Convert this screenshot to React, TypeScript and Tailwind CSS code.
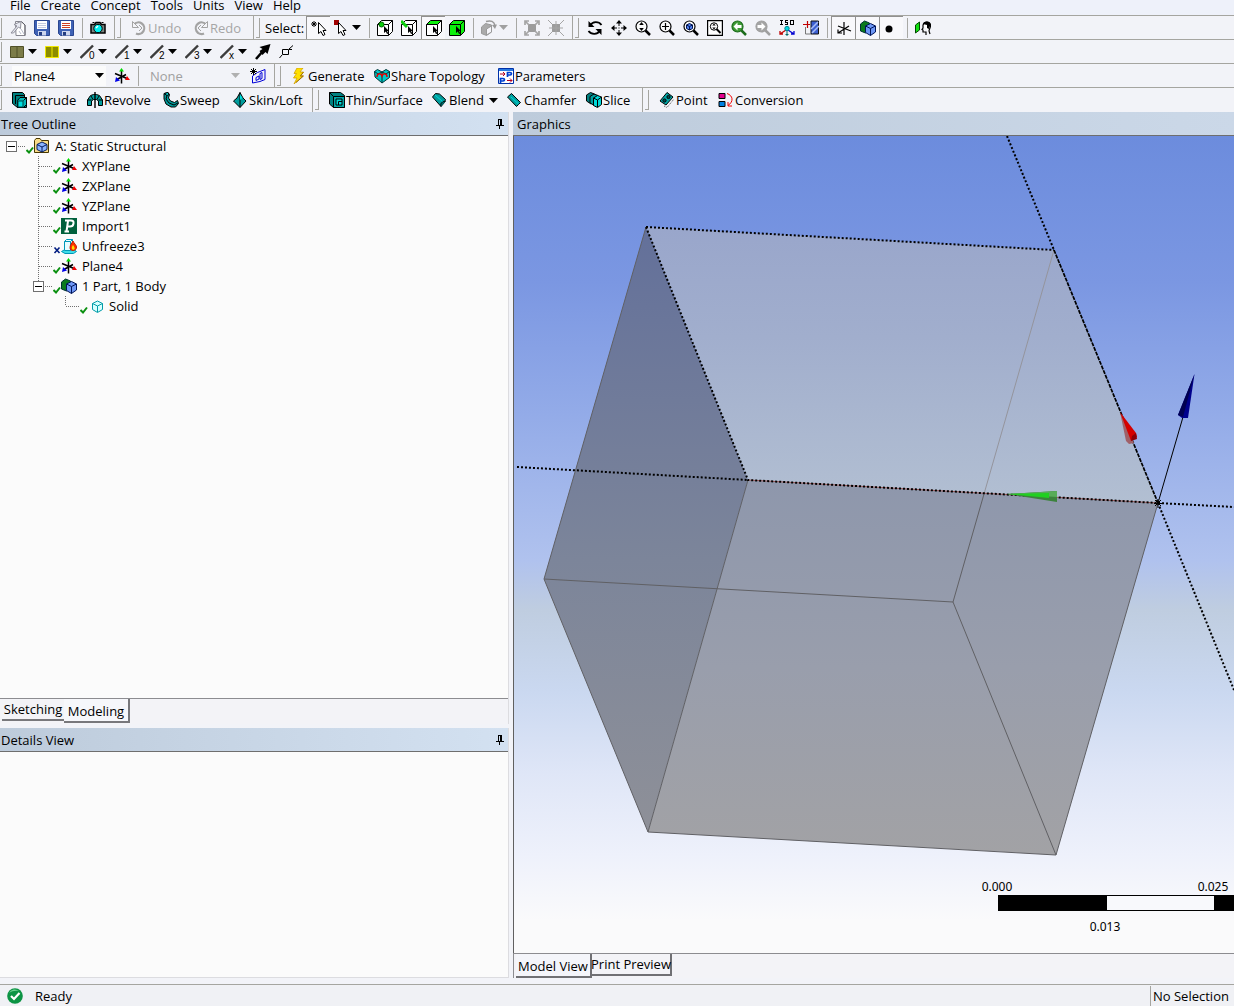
import React from "react";
import type { ReactNode } from "react";

/* ---------- icon helpers ---------- */

function Ico({ children, w = 16, crisp = false }: { children: ReactNode; w?: number; crisp?: boolean }) {
  return (
    <svg
      width={w}
      height={16}
      viewBox={`0 0 ${w} 16`}
      fill="none"
      stroke="#000"
      strokeWidth="1"
      shapeRendering={crisp ? "crispEdges" : "auto"}
      className="shrink-0"
      aria-hidden="true"
    >
      {children}
    </svg>
  );
}

function Caret({ className = "text-black" }: { className?: string }) {
  return (
    <svg width="9" height="5" viewBox="0 0 9 5" className={"shrink-0 " + className} aria-hidden="true">
      <path d="M0 0h9L4.5 5z" fill="currentColor" />
    </svg>
  );
}

const NewIcon = () => (
  <Ico>
    <path d="M5.5 1.500h5.500l4 3.500v10.500h-9z" fill="#fff" stroke="#85858f" />
    <path d="M15 15.500V5l-3.500-3.500" stroke="#606068" />
    <path d="M1 13l6-7-3-1.500 7-3-.5 7-2-1.500-5 6z" fill="#e8eaf2" stroke="#90909c" />
    <path d="M11 9l3 5M9 11l2 3" stroke="#b8bccb" />
  </Ico>
);

const SaveIcon = ({ lines = "#c5cbe0" }: { lines?: string }) => (
  <Ico>
    <path d="M.5.500h15v15H2.500l-2-2z" fill="#3f62b5" stroke="#2a4690" />
    <path d="M3 1h10v8H3z" fill="#fff" stroke="none" />
    <path d="M4 3.500h8M4 5.500h8M4 7.500h8" stroke={lines} />
    <path d="M4 11h8v4.500H4z" fill="#cdd6ee" stroke="none" />
    <path d="M5 12h3v3.500H5z" fill="#233c80" stroke="none" />
  </Ico>
);

const CameraIcon = () => (
  <Ico>
    <path d="M1 4.500h3.500l1.500-2h4l1.500 2H15v8.500H1z" fill="#7c8480" strokeWidth="1.500" />
    <path d="M2.500 2.500h2M11.500 2.500h2" />
    <circle cx="8" cy="8.500" r="4.200" fill="#00f0f0" />
    <path d="M6 8l2-2" stroke="#fff" strokeWidth="1.500" />
  </Ico>
);

const UndoIcon = ({ flip = false }: { flip?: boolean }) => (
  <Ico>
    <g transform={flip ? "matrix(-1 0 0 1 16 0)" : undefined} stroke="#a3a3a3">
      <path d="M3 4.500A5.800 5.800 0 1 1 5 13.500" strokeWidth="2.200" />
      <path d="M1.500 1.500v6h6z" fill="#f4f4f8" />
      <path d="M8 5l3 3-3 3" />
    </g>
  </Ico>
);

const PointerIcon = ({ red = false }: { red?: boolean }) => (
  <Ico>
    {red ? (
      <path d="M0 0h5v5H0z" fill="#a00000" stroke="none" />
    ) : (
      <path d="M3 1v6M0 4h6M1 2l4 4M5 2L1 6" />
    )}
    <path d={red ? "M4.500 2.500v11l2.500-2 2 4 2-1-2-4h3z" : "M7.500 2.500v11l2.500-2 2 4 2-1-2-4h3z"} fill="#fff" />
  </Ico>
);

const FilterCube = ({ kind }: { kind: "vertex" | "edge" | "face" | "body" }) => {
  const body = kind === "body";
  return (
    <Ico>
      <path d="M1 4l3-3h11v11l-3 3H1z" fill={body ? "#0cf00c" : "#fff"} stroke="none" />
      {kind === "face" && <path d="M1 4l3-3h11l-3 3z" fill="#0cf00c" stroke="none" />}
      <path d="M.500 4.500h11v11H.500zM.500 4.500l4-4h11l-4 4M15.500.500v11l-4 4" />
      {kind === "vertex" && <circle cx="4.500" cy="4.500" r="2.500" fill="#0cd00c" stroke="#060" />}
      {kind === "edge" && <path d="M0 1l6 6" stroke="#0cd00c" strokeWidth="3" />}
      <path d="M7 6v7l1.800-1.500 1.200 2.500 1.300-.6-1.200-2.400H12z" fill="#000" stroke="none" />
    </Ico>
  );
};

const AdjIcon = () => (
  <Ico>
    <path d="M.500 7l4-3.500 6 1.500v7l-5 3.500-5-2z" fill="#aaa" stroke="#999" />
    <path d="M5.500 9l5-3v6l-5 3z" fill="#f4f4f8" stroke="#999" />
    <path d="M5 1.500c5-1.500 8 0 9 4" stroke="#999" strokeWidth="1.500" />
    <path d="M14 9l-3-4 5-.5z" stroke="none" fill="#999" />
  </Ico>
);

const ExpandIcon = ({ inward = false }: { inward?: boolean }) => (
  <Ico>
    <path d="M4 4h8v8H4z" fill="#9c9c9c" stroke="none" />
    {inward ? (
      <path d="M0 0l4 4M16 0l-4 4M0 16l4-4M16 16l-4-4M8 1v14M1 8h14" stroke="#a5a5a5" />
    ) : (
      <path d="M1 5V1h4M11 1h4v4M15 11v4h-4M5 15H1v-4M1 1l4 4M15 1l-4 4M1 15l4-4M15 15l-4-4" stroke="#a5a5a5" strokeWidth="1.700" />
    )}
  </Ico>
);

const RotateIcon = () => (
  <Ico>
    <path d="M3.500 5c2-3.500 8-4 11 0M12.500 11c-2 3.500-8 4-11 0" strokeWidth="1.800" />
    <path d="M1.500 1v6h6zM14.500 15V9h-6z" fill="#000" stroke="none" />
  </Ico>
);

const PanIcon = () => (
  <Ico>
    <path d="M8 1v5M8 10v5M1 8h5M10 8h5" />
    <path d="M8 0l3 3.500H5zM8 16l3-3.500H5zM0 8l3.500-3v6zM16 8l-3.500-3v6z" fill="#000" stroke="none" />
    <path d="M7.500 7.500h1v1h-1z" fill="#000" stroke="none" />
  </Ico>
);

const Lens = ({ color = "#000", fill = "#fafafa", children }: { color?: string; fill?: string; children?: ReactNode }) => (
  <Ico>
    <path d="M10.500 10.500l4.500 4.500" stroke={color} strokeWidth="2.500" />
    <circle cx="6.500" cy="6.500" r="5.500" fill={fill} stroke={color} strokeWidth="1.200" />
    {children}
  </Ico>
);

const ZoomBoxIcon = () => (
  <Ico>
    <path d="M.5.500h15v15H.500z" fill="#fff" strokeWidth="1.400" />
    <circle cx="7" cy="6.500" r="3.700" />
    <path d="M9.500 9l4 4" strokeWidth="2" />
    <path d="M7 3.500l1.700 2H5.300zM7 9.500l1.700-2H5.300z" fill="#000" stroke="none" />
  </Ico>
);

const IsoIcon = () => (
  <Ico>
    <path d="M1 .5h3M2.500.500v4M1 4.500h3M9 .5H6v2h2.500v2H6M11.500.500h3v4h-3z" shapeRendering="crispEdges" />
    <path d="M8 9v6" stroke="#006868" />
    <path d="M6 14h4l-2 2z" fill="#006868" stroke="none" />
    <path d="M7 10l-6 4M1 11v3h3" stroke="#c00000" strokeWidth="1.300" />
    <path d="M9 10l6 4M15 11v3h-3" stroke="#0000d0" strokeWidth="1.300" />
    <circle cx="8" cy="8.500" r="2.200" fill="#00d8e0" stroke="#008890" />
  </Ico>
);

const LookAtIcon = () => (
  <Ico>
    <path d="M8 1h7.500v13H8z" fill="#3c5fd0" stroke="#111" />
    <path d="M8 9l7-7M9 13l7-7" stroke="#a8bdf5" strokeWidth="1.500" />
    <path d="M2.500 7v7H8" stroke="#777" />
    <path d="M0 4.500h7M4.500 1v7" stroke="#c00000" strokeWidth="1.200" />
  </Ico>
);

const PlaneAxisIcon = () => (
  <Ico>
    <path d="M7.500 3v12.500M1 5.500l12 5M3 11.500l9-5" strokeWidth="1.500" />
    <path d="M7.500 0l2.500 3.500H5z" fill="#00dc00" stroke="none" />
    <path d="M16 12h-5l2-4z" fill="#f00000" stroke="none" />
    <path d="M1 14l1-5 4 3.500z" fill="#0000e8" stroke="none" />
  </Ico>
);

const AxisBlackIcon = () => (
  <Ico>
    <path d="M8 2v13M2 6l13 5M2 13l11-7M2 9.500V13h4" strokeWidth="1.200" />
  </Ico>
);

const BodiesIcon = () => (
  <Ico>
    <path d="M.500 4l4-3 5 2v7l-4 3-5-2z" fill="#0a7a1c" stroke="#033" />
    <path d="M5.500 6l5-2.500 5 2.500v6l-5 3.500-5-3z" fill="#6d96f5" stroke="#001458" />
    <path d="M5.500 6l5 2.500 5-2.500M10.500 8.500v7" stroke="#001458" />
  </Ico>
);

const FaceLookIcon = () => (
  <Ico>
    <path d="M.500 5l4-3v8l-4 3z" fill="#10e010" stroke="#040" />
    <path d="M8 5c1-4 7-4 7.500 0 .3 3-1.500 4-1.500 6l1 3M8 5v3l-1 1.500 1 .5v2h3v3" fill="#fff" strokeWidth="1.200" />
    <path d="M8 4c1-3.500 7-3.500 7.500.5L14 9l-2-1V5z" fill="#000" stroke="none" />
  </Ico>
);

const SquaresIcon = ({ fill, edge }: { fill: string; edge: string }) => (
  <Ico w={14}>
    <path d="M.500 2.500h13v11H.500z" fill={fill} stroke={edge} />
    <path d="M7 2v12" stroke={edge} />
  </Ico>
);

const EdgeIcon = ({ mark }: { mark: string }) => (
  <Ico>
    <path d="M.500 14L13 1.500" stroke="#3c3c3c" strokeWidth="2.400" />
    <text x="9" y="15" fontSize="10" fill="#000" stroke="none" fontFamily="Liberation Sans, sans-serif">
      {mark}
    </text>
  </Ico>
);

const BigArrowIcon = () => (
  <Ico>
    <path d="M1 15l7-8" strokeWidth="2.500" />
    <path d="M15.500 0l-3 10-2-2-3 3-3-4 3-2-3-2z" fill="#000" stroke="none" />
  </Ico>
);

const NodeIcon = () => (
  <Ico>
    <path d="M3.500 5.500h6v5h-6zM3 11l-2.500 3M10 5l4-3.500M10 5.500h3" />
  </Ico>
);

const NewPlaneIcon = () => (
  <Ico>
    <path d="M2.500 15v-7l5-3.500 7.500-3v10l-5 2z" stroke="#0000d8" />
    <path d="M6 9.500l3-1.500v3l-3 1.500zM10 5.500l2-1v6l-2 1z" stroke="#0000d8" />
    <path d="M3.500 0v7M0 3.500h7M1 1l5 5M6 1L1 6" />
  </Ico>
);

const BoltIcon = () => (
  <Ico>
    <path d="M6 0h6L9 4h3.500L9 8h3L3 16l3-6H2.500l3-4.500H3z" fill="#ffe000" stroke="#d0a000" strokeWidth="0.800" />
    <path d="M12.500 4L9.500 8h3L5 14.500" stroke="#a07000" />
  </Ico>
);

const ShareIcon = () => (
  <Ico>
    <path d="M.500 3.500l3-2L8 4l4-2.500 3.500 2v6L8 15 1 9z" fill="#00c8c8" stroke="#033" />
    <path d="M8 4v11M.500 3.500L4 6l4-2 4 2 3.500-2.500" stroke="#033" />
    <path d="M3 9c0-4 4-4 5-1 1-3 5-3 5 1" stroke="#e00000" strokeWidth="1.500" />
  </Ico>
);

const ParamIcon = () => (
  <Ico>
    <path d="M.500.500h15v15H.500z" fill="#fff" stroke="#0030a8" />
    <path d="M1 1h14v2H1z" fill="#2878e0" stroke="none" />
    <path d="M9.500 9V4.500H12q1.500 0 1.500 1.200T12 7H9.500M2.500 15v-4.500H5q1.500 0 1.500 1.200T5 13H2.500" stroke="#0040d0" strokeWidth="1.700" />
    <path d="M2 6h5M5 4l2 2-2 2M9 12.500h5M12 10.500l2 2-2 2" stroke="#b00020" />
  </Ico>
);

const ExtrudeIcon = () => (
  <Ico>
    <path d="M.500.500h10l2 2v3h2v10h-9l-5-4z" fill="#008080" />
    <path d="M3.500 12V3.500h8.500" />
    <path d="M5.500 8.500l2.500-3h6.500v7l-3 3h-6z" fill="#00b8b8" />
    <path d="M6 9h5v6H6z" fill="#00e0e0" stroke="#004848" />
    <path d="M11.500 8.500l3-3" />
  </Ico>
);

const RevolveIcon = () => (
  <Ico>
    <path d="M.500 13.500V8l3-4.500 3-1h3l3 1 3 4.500v5.500h-4V9l-2-1.500h-3L4.500 9v4.500z" fill="#009c9c" />
    <path d="M.500 8h4M15.500 8h-4M4 4l2 3.500M12 4l-2 3.500" />
    <path d="M8 0v16" strokeWidth="1.400" />
  </Ico>
);

const SweepIcon = () => (
  <Ico>
    <path d="M1 1.500l4-1 1.500 2L5.500 6l2 3 4 1.500 3-2 1 3-3 3.500H8L3 12 1 7z" fill="#009898" />
    <path d="M1 1.500l3 2L3 7l3 4 5 2 4-2" />
    <path d="M1.500 1.500l3.500-1 1 2-2 1z" fill="#00e8e8" />
  </Ico>
);

const LoftIcon = () => (
  <Ico>
    <path d="M8 .5L5 6l-3.500 3L8 15.500 14 9l-3-3z" fill="#009c9c" />
    <path d="M8 .5v15" />
    <path d="M8 2l2.500 4L8 8z" fill="#00dede" stroke="none" />
  </Ico>
);

const ThinIcon = () => (
  <Ico>
    <path d="M.500.500h11l4 3v12h-11l-4-3.500z" fill="#008080" />
    <path d="M4.500 4.500h11v11h-11z" fill="#00a8a8" />
    <path d="M7 7h6v6H7zM9.500 13V9.500H13" fill="#00d8d8" />
    <path d="M.500.500l4 4" />
  </Ico>
);

const BlendIcon = () => (
  <Ico>
    <path d="M.500 5l3-3.500 4 .5 6 5.500-1 3-3.500 4z" fill="#009c9c" />
    <path d="M9 14.500c-1-3 1-5.500 4.500-5" fill="#006c6c" />
    <path d="M3 3l7.500 6.500" stroke="#00dada" />
  </Ico>
);

const ChamferIcon = () => (
  <Ico>
    <path d="M.500 5l4-3.500 9 9-4 4z" fill="#00a0a0" />
    <path d="M4 5l7.500 7" stroke="#00dada" />
  </Ico>
);

const SliceIcon = () => (
  <Ico>
    <path d="M.500 3l4-2.500 4 1.500v7L5 12 .500 9z" fill="#008080" />
    <path d="M4 4.500L8 2l4 1.500v8l-3.500 2L4 11z" fill="#00a0a0" />
    <path d="M7.500 6l4-2.500 4 1.500v7.500l-4 3-4-2z" fill="#00dada" />
    <path d="M7.500 6l4 2v7M11.500 8l4-3" />
  </Ico>
);

const PointIcon = () => (
  <Ico>
    <path d="M5 14l3 1.500L15 7" stroke="#555" strokeDasharray="1 1" />
    <path d="M1 9l7-8.500L14 5l-7 8z" fill="#00a8a8" />
    <circle cx="9.500" cy="5" r="1.600" fill="#005050" />
    <circle cx="5.500" cy="8.500" r="1.600" fill="#005050" />
  </Ico>
);

const ConversionIcon = () => (
  <Ico>
    <path d="M1 1.500h6v5H1z" fill="#e0008c" />
    <path d="M1 9.500h6v5H1z" fill="#0080e0" />
    <path d="M9 1.500c6 2 7 8 1 12M10 10v4h4" stroke="#f00000" />
  </Ico>
);

const ProjectIcon = () => (
  <Ico>
    <path d="M.500 14.500V2.500l1.500-2h4l1.500 2h7v12z" fill="#f8dc88" stroke="#4a3800" />
    <path d="M3 6.500L8 4l5 2.500v5L8 14l-5-2.500z" fill="#8cb4ff" stroke="#001a60" />
    <path d="M3 6.500L8 9l5-2.500M8 9v5" stroke="#001a60" />
  </Ico>
);

const ImportIcon = () => (
  <Ico>
    <path d="M0 0h16v16H0z" fill="#00603c" stroke="none" />
    <path d="M3.500 13.500h4.500M5.500 13.500l1.500-10.500M4 2.500h6q3 0 2.500 3T9 8.500H6.500" stroke="#fff" strokeWidth="2" />
  </Ico>
);

const UnfreezeIcon = () => (
  <Ico>
    <path d="M.500 13.500L4 11.500h9l2.500 2-3 2H4z" fill="#40dce8" stroke="#0098b8" />
    <path d="M3.500 3.500l2-2h6v9l-2 2H3.500z" fill="#e8fcff" stroke="#0098b8" />
    <path d="M3.500 3.500h6v9M9.500 3.500l2-2" stroke="#0098b8" />
    <path d="M12 3c-1 2-3 4-3 6.500 0 2 1 3 3 3s3.500-1 3.500-3.500C15.500 7 13 5.500 12 3z" fill="#ff3000" stroke="#c02000" />
    <path d="M12 7c-1 1.500-1.500 2.500-1 4 .5 1 2 1 2.500 0S13 8.500 12 7z" fill="#ffe000" stroke="none" />
  </Ico>
);

const SolidIcon = () => (
  <Ico>
    <path d="M4.500 5.500l5-2.500 5 2.500v6l-5 3-5-3z" fill="#d8ffff" stroke="#009ca8" />
    <path d="M4.500 5.500l5 2.500 5-2.500M9.500 8v6" stroke="#009ca8" />
  </Ico>
);

const StatusOk = () => (
  <svg width="16" height="16" viewBox="0 0 16 16" className="shrink-0" aria-hidden="true">
    <circle cx="8" cy="8" r="7.800" fill="#0c9444" />
    <path d="M2 5a6.500 6.500 0 0 1 10-2c-4-.5-7 0-10 2z" fill="#6cd090" />
    <path d="M4 8l3 3 5.500-6" stroke="#fff" strokeWidth="2.200" fill="none" />
  </svg>
);

/* ---------- toolbar parts ---------- */

function Band({ first = false, last = false, children, label }: { first?: boolean; last?: boolean; children: ReactNode; label: string }) {
  return (
    <div role="toolbar" aria-label={label} className={"flex items-center self-stretch pr-0.5 " + (last ? "" : "border-r border-[#a5a5a0]")}>
      <span
        className={
          first
            ? "mr-1 h-5 w-0.5 shrink-0 border-r border-b border-[#a5a5a0]"
            : "mr-1 ml-0.5 h-5 w-1 shrink-0 border-r border-b border-[#a5a5a0]"
        }
      />
      {children}
    </div>
  );
}

function Sep() {
  return (
    <span className="flex w-2 shrink-0 justify-center">
      <span className="h-5 w-px bg-[#a8a8a4]" />
    </span>
  );
}

function Tool({ label, pressed = false, children }: { label: string; pressed?: boolean; children: ReactNode }) {
  return (
    <button
      type="button"
      aria-label={label}
      className={
        "flex size-6 shrink-0 items-center justify-center " +
        (pressed ? "border-t border-l border-[#909090] bg-[#f8f8fb]" : "")
      }
    >
      {children}
    </button>
  );
}

function DropTool({ label, disabled = false, children }: { label: string; disabled?: boolean; children: ReactNode }) {
  return (
    <button type="button" aria-label={label} disabled={disabled} className="flex h-6 w-[35px] shrink-0 items-center justify-between pr-1 pl-1">
      {children}
      <Caret className={disabled ? "text-[#a0a0a0]" : "text-black"} />
    </button>
  );
}

function TextTool({ label, width, icon, drop = false, disabled = false }: { label: string; width: string; icon: ReactNode; drop?: boolean; disabled?: boolean }) {
  return (
    <button
      type="button"
      disabled={disabled}
      className={"flex h-6 shrink-0 items-center gap-px pl-1.5 whitespace-nowrap disabled:text-[#a6a6a6] " + width}
    >
      {icon}
      <span>{label}</span>
      {drop && <span className="ml-1"><Caret /></span>}
    </button>
  );
}

function Combo({ label, value, disabled = false }: { label: string; value: string; disabled?: boolean }) {
  return (
    <div className="relative ml-1.5 w-[94px] shrink-0">
      <select
        aria-label={label}
        disabled={disabled}
        className={
          "h-5 w-full appearance-none pl-0.5 opacity-100 " + (disabled ? "bg-transparent text-[#a0a0a0]" : "bg-[#fbfbfb] text-black")
        }
      >
        <option>{value}</option>
      </select>
      <span className="pointer-events-none absolute inset-y-0 right-0.5 flex items-center">
        <Caret className={disabled ? "text-[#b0b0b0]" : "text-black"} />
      </span>
    </div>
  );
}

function Row({ children }: { children: ReactNode }) {
  return <div className="flex h-6 shrink-0 items-center border-t border-[#a5a5a0]">{children}</div>;
}

function PaneHeader({ title, pin = false, tone = "pl-px from-[#bdcbdb] to-[#d3e1f1]" }: { title: string; pin?: boolean; tone?: string }) {
  return (
    <div className={"flex h-6 shrink-0 items-center justify-between border-b border-[#6e6e6e] bg-linear-to-r pr-1 " + tone}>
      <h2>{title}</h2>
      {pin && (
        <button type="button" aria-label={"Pin " + title}>
          <svg width="8" height="10" viewBox="0 0 8 10" shapeRendering="crispEdges" aria-hidden="true">
            <path d="M2 0h4v1H2zM2 0h1v6H2zM4 0h2v6H4zM0 6h8v1H0zM3 7h1v3H3z" fill="#000" />
          </svg>
        </button>
      )}
    </div>
  );
}

/* ---------- tree ---------- */

type Guide = "root" | "tee" | "node" | "elbow";
type Item = { label: string; level: 0 | 1 | 2; guide: Guide; icon: ReactNode; off?: boolean };

const items: Item[] = [
  { label: "A: Static Structural", level: 0, guide: "root", icon: <ProjectIcon /> },
  { label: "XYPlane", level: 1, guide: "tee", icon: <PlaneAxisIcon /> },
  { label: "ZXPlane", level: 1, guide: "tee", icon: <PlaneAxisIcon /> },
  { label: "YZPlane", level: 1, guide: "tee", icon: <PlaneAxisIcon /> },
  { label: "Import1", level: 1, guide: "tee", icon: <ImportIcon /> },
  { label: "Unfreeze3", level: 1, guide: "tee", icon: <UnfreezeIcon />, off: true },
  { label: "Plane4", level: 1, guide: "tee", icon: <PlaneAxisIcon /> },
  { label: "1 Part, 1 Body", level: 1, guide: "node", icon: <BodiesIcon /> },
  { label: "Solid", level: 2, guide: "elbow", icon: <SolidIcon /> },
];

const indents = ["pl-1.5", "pl-[33px]", "pl-[60px]"];

function GuideCell({ kind }: { kind: Guide }) {
  const box = kind === "root" || kind === "node";
  return (
    <svg width="20" height="20" viewBox="0 0 20 20" fill="none" stroke="#707070" shapeRendering="crispEdges" className="shrink-0" aria-hidden="true">
      {kind === "tee" && <path d="M5.500 0v20" strokeDasharray="1 1" />}
      {kind === "elbow" && <path d="M5.500 0v10" strokeDasharray="1 1" />}
      {kind === "node" && <path d="M5.500 0v5" strokeDasharray="1 1" />}
      <path d={box ? "M12 10.500h8" : "M6 10.500h13"} strokeDasharray="1 1" />
      {box && <path d="M.500 5.500h10v10H.500z" fill="#fff" />}
      {box && <path d="M2 10.500h7" stroke="#000" />}
    </svg>
  );
}

function Mark({ off = false }: { off?: boolean }) {
  return (
    <svg width="8" height="8" viewBox="0 0 8 8" fill="none" className="mt-2 shrink-0" aria-hidden="true">
      {off ? (
        <path d="M1.500 1.500l5 5.500M6.500 1.500l-5 5.500" stroke="#001c80" strokeWidth="1.600" />
      ) : (
        <path d="M.500 4l2.500 2.500 4-5" stroke="#0a9010" strokeWidth="2" />
      )}
    </svg>
  );
}

function Tree() {
  return (
    <ul role="tree" aria-label="Tree Outline" className="min-h-0 flex-1 overflow-hidden">
      {items.map((it) => (
        <li key={it.label} role="treeitem" className={"flex h-5 items-center " + indents[it.level]}>
          <GuideCell kind={it.guide} />
          <Mark off={it.off} />
          {it.icon}
          <span className="ml-1 px-px pb-px whitespace-nowrap">{it.label}</span>
        </li>
      ))}
    </ul>
  );
}

/* ---------- 3D view ---------- */

function Scene() {
  return (
    <svg
      viewBox="514 136 720 817"
      preserveAspectRatio="xMinYMin slice"
      className="block h-full w-full"
      role="img"
      aria-label="Solid body with Plane4 axes"
    >
      <defs>
        <linearGradient id="topFace" x1="0" y1="227" x2="0" y2="503" gradientUnits="userSpaceOnUse">
          <stop offset="0" stopColor="#99a6cb" />
          <stop offset="0.400" stopColor="#a1aecd" />
          <stop offset="1" stopColor="#b2bfd2" />
        </linearGradient>
        <linearGradient id="leftFace" x1="0" y1="227" x2="0" y2="832" gradientUnits="userSpaceOnUse">
          <stop offset="0" stopColor="#63709a" />
          <stop offset="0.550" stopColor="#7c859a" />
          <stop offset="1" stopColor="#8e9098" />
        </linearGradient>
        <linearGradient id="frontFace" x1="0" y1="480" x2="0" y2="855" gradientUnits="userSpaceOnUse">
          <stop offset="0" stopColor="#8e97ac" />
          <stop offset="0.500" stopColor="#999eac" />
          <stop offset="1" stopColor="#a2a2a5" />
        </linearGradient>
      </defs>
      <path d="M646 227L1054 250L1158 503L748 480z" fill="url(#topFace)" />
      <path d="M646 227L748 480L648 832L544 579z" fill="url(#leftFace)" />
      <path d="M748 480L1158 503L1056 855L648 832z" fill="url(#frontFace)" />
      <g fill="none" stroke="#606064" strokeWidth="1">
        <path d="M646 227L544 579L648 832L1056 855L1158 503" />
        <path d="M748 480L648 832M544 579L953 602L1056 855" />
        <path d="M953 602L984 494" />
        <path d="M984 494L1054 250" stroke="#94949c" />
      </g>
      <path d="M748 480L1158 503" stroke="#9c5858" />
      <g fill="none" stroke="#000" strokeWidth="2" strokeDasharray="2 2">
        <path d="M646 227L1054 250M646 227L748 480L1158 503M1007 136L1054 250" />
        <path d="M517 467L748 480M1158 503L1234 507M1158 503L1234 690" />
      </g>
      <path d="M1054 250L1158 503" stroke="#000" strokeWidth="1.700" strokeDasharray="4 1" />
      <path d="M1158 503L1183 417" stroke="#000" />
      <path d="M1194.500 374L1178 415l4 3 6 0z" fill="#00008c" />
      <path d="M1194.500 374L1178 415l5 2z" fill="#000050" />
      <path d="M1120 412l6 29 3 3 5-1z" fill="#a06068" />
      <path d="M1120 412l11 29 6-4-1-4z" fill="#d40000" />
      <path d="M1131 441l1-5 4-3 1 6z" fill="#8c0008" />
      <path d="M1007 494l50-3v11z" fill="#3c823c" />
      <path d="M1007 494l50-3v6z" fill="#58ac58" />
      <path d="M1007 494l42-1v5z" fill="#20d020" />
      <path d="M1155 500l6 6M1161 500l-6 6M1158 499v9M1154 503.500h8" stroke="#000" />
      <g shapeRendering="crispEdges">
        <path d="M998 895h236v16H998z" fill="#000" />
        <path d="M1107 896h107v14h-107z" fill="#f8f9fc" />
      </g>
      <g fontSize="12" fill="#000" fontFamily="Noto Sans, sans-serif" textAnchor="middle">
        <text x="997" y="891">0.000</text>
        <text x="1213" y="891">0.025</text>
        <text x="1105" y="931">0.013</text>
      </g>
    </svg>
  );
}

const menus = ["File", "Create", "Concept", "Tools", "Units", "View", "Help"];

export default function App() {
  return (
    <div className="flex h-screen flex-col overflow-hidden bg-[#f2f3f8] font-['Open_Sans',sans-serif] text-[13px] leading-5 text-black">
      <nav aria-label="Menu" className="flex h-[15px] shrink-0 items-start gap-2.5 bg-[#eef1fa] pl-2.5 leading-[11px]">
        {menus.map((m) => (
          <button key={m} type="button" className="shrink-0">
            {m}
          </button>
        ))}
      </nav>

      <Row>
        <Band first label="File">
          <Tool label="New"><NewIcon /></Tool>
          <Tool label="Save"><SaveIcon /></Tool>
          <Tool label="Save as"><SaveIcon lines="#d04020" /></Tool>
          <Sep />
          <Tool label="Image capture"><CameraIcon /></Tool>
          <span className="w-0.5" />
        </Band>
        <Band label="History">
          <TextTool label="Undo" width="w-[62px]" icon={<UndoIcon />} disabled />
          <TextTool label="Redo" width="w-[62px]" icon={<UndoIcon flip />} disabled />
          <span className="w-0.5" />
        </Band>
        <Band label="Selection">
          <span className="w-[42px] shrink-0 pl-px">Select:</span>
          <Tool label="New selection" pressed><PointerIcon /></Tool>
          <DropTool label="Select mode"><PointerIcon red /></DropTool>
          <Sep />
          <Tool label="Points"><FilterCube kind="vertex" /></Tool>
          <Tool label="Edges"><FilterCube kind="edge" /></Tool>
          <Tool label="Faces" pressed><FilterCube kind="face" /></Tool>
          <Tool label="Bodies"><FilterCube kind="body" /></Tool>
          <Sep />
          <DropTool label="Extend selection" disabled><AdjIcon /></DropTool>
          <Sep />
          <Tool label="Expand"><ExpandIcon /></Tool>
          <Tool label="Shrink"><ExpandIcon inward /></Tool>
          <span className="w-0.5" />
        </Band>
        <Band last label="View">
          <Tool label="Rotate"><RotateIcon /></Tool>
          <Tool label="Pan"><PanIcon /></Tool>
          <Tool label="Zoom">
            <Lens><path d="M6.500 2l2.300 3H4.200zM6.500 11l2.300-3H4.200z" fill="#000" stroke="none" /></Lens>
          </Tool>
          <Tool label="Box zoom">
            <Lens><path d="M6.500 3v7M3 6.500h7" strokeWidth="1.200" /></Lens>
          </Tool>
          <Tool label="Zoom to fit">
            <Lens>
              <path d="M3.500 5l3-1.500 3 1.500v3.500l-3 1.500-3-1.500z" fill="#5080f0" stroke="#001450" />
              <path d="M3.500 5l3 1.500 3-1.500M6.500 6.500V10" stroke="#001450" />
            </Lens>
          </Tool>
          <Tool label="Magnifier"><ZoomBoxIcon /></Tool>
          <Tool label="Previous view">
            <Lens color="#1c6c1c" fill="#3f9a35"><path d="M2.500 6.500l4-4v2.500h4v3h-4v2.500z" fill="#fff" stroke="none" /></Lens>
          </Tool>
          <Tool label="Next view">
            <Lens color="#a0a0a0" fill="#a4a4a4"><path d="M10.500 6.500l-4-4v2.500h-4v3h4v2.500z" fill="#fff" stroke="none" /></Lens>
          </Tool>
          <Tool label="Isometric view"><IsoIcon /></Tool>
          <Tool label="Look at"><LookAtIcon /></Tool>
          <Sep />
          <Tool label="Display plane" pressed><AxisBlackIcon /></Tool>
          <Tool label="Display model" pressed><BodiesIcon /></Tool>
          <Tool label="Display points" pressed>
            <Ico><circle cx="5" cy="9" r="3.500" fill="#000" stroke="none" /></Ico>
          </Tool>
          <Sep />
          <Tool label="Look at face"><FaceLookIcon /></Tool>
        </Band>
      </Row>

      <Row>
        <Band first last label="Graphics options">
          <DropTool label="Face coloring"><SquaresIcon fill="#7c7c48" edge="#505028" /></DropTool>
          <DropTool label="Highlight"><SquaresIcon fill="#8c8c00" edge="#f0e800" /></DropTool>
          <DropTool label="Edges with 0 faces"><EdgeIcon mark="0" /></DropTool>
          <DropTool label="Edges with 1 face"><EdgeIcon mark="1" /></DropTool>
          <DropTool label="Edges with 2 faces"><EdgeIcon mark="2" /></DropTool>
          <DropTool label="Edges with 3 faces"><EdgeIcon mark="3" /></DropTool>
          <DropTool label="Edges with more faces"><EdgeIcon mark="x" /></DropTool>
          <Tool label="Edge direction"><BigArrowIcon /></Tool>
          <Tool label="Display vertices"><NodeIcon /></Tool>
        </Band>
      </Row>

      <Row>
        <Band first label="Active plane">
          <Combo label="Active plane" value="Plane4" />
          <span className="w-1" />
          <Tool label="New plane"><PlaneAxisIcon /></Tool>
          <Sep />
          <Combo label="Active sketch" value="None" disabled />
          <span className="w-1" />
          <Tool label="New sketch"><NewPlaneIcon /></Tool>
          <span className="w-0.5" />
        </Band>
        <Band last label="Generate">
          <TextTool label="Generate" width="w-[83px]" icon={<BoltIcon />} />
          <TextTool label="Share Topology" width="w-[124px]" icon={<ShareIcon />} />
          <TextTool label="Parameters" width="w-24" icon={<ParamIcon />} />
        </Band>
      </Row>

      <div className="flex h-[25px] shrink-0 items-center border-t border-[#a5a5a0]">
        <Band first label="Features">
          <TextTool label="Extrude" width="w-[75px]" icon={<ExtrudeIcon />} />
          <TextTool label="Revolve" width="w-[76px]" icon={<RevolveIcon />} />
          <TextTool label="Sweep" width="w-[69px]" icon={<SweepIcon />} />
          <TextTool label="Skin/Loft" width="w-[84px]" icon={<LoftIcon />} />
        </Band>
        <Band label="Surface features">
          <TextTool label="Thin/Surface" width="w-[103px]" icon={<ThinIcon />} />
          <TextTool label="Blend" width="w-[75px]" icon={<BlendIcon />} drop />
          <TextTool label="Chamfer" width="w-[79px]" icon={<ChamferIcon />} />
          <TextTool label="Slice" width="w-[60px]" icon={<SliceIcon />} />
        </Band>
        <Band last label="Point features">
          <TextTool label="Point" width="w-[59px]" icon={<PointIcon />} />
          <TextTool label="Conversion" width="w-24" icon={<ConversionIcon />} />
        </Band>
      </div>

      <main className="flex min-h-0 flex-1">
        <div className="flex w-[509px] shrink-0 flex-col">
          <section className="flex min-h-0 flex-1 flex-col border-r border-[#dcdce0] bg-[#fbfbfb]">
            <PaneHeader title="Tree Outline" pin />
            <Tree />
            <div role="tablist" className="flex h-[26px] shrink-0 items-start border-t border-[#8c8c90] bg-[#f3f3f7] pl-0.5 whitespace-nowrap">
              <button type="button" role="tab" className="h-[22px] w-[62px] border-b-2 border-[#78787c] text-center">
                Sketching
              </button>
              <button type="button" role="tab" aria-selected="true" className="h-6 w-[66px] border-r-2 border-b-2 border-[#78787c] bg-[#f6f7fb] pt-0.5 text-center">
                Modeling
              </button>
            </div>
          </section>
          <section className="mt-1 flex h-[250px] shrink-0 flex-col border-r border-b border-[#dcdce0] bg-[#fbfbfb]">
            <PaneHeader title="Details View" pin />
          </section>
        </div>

        <section className="ml-1 flex min-w-0 flex-1 flex-col">
          <PaneHeader title="Graphics" tone="pl-1 from-[#bdcbdb] to-[#cbd8e8]" />
          <div className="min-h-0 flex-1 overflow-hidden border-l border-[#606060] bg-[linear-gradient(to_bottom,#6c8cdd_0%,#7b97e2_18%,#93abe8_34%,#b0c2ee_52%,#bfcde0_58%,#cad8f0_68%,#dfe6f7_78%,#eef1fb_88%,#fafafb_96%)]">
            <Scene />
          </div>
          <div role="tablist" className="flex h-[25px] shrink-0 items-start border-t border-l border-[#8c8c90] bg-[#f3f3f7] pl-0.5 whitespace-nowrap">
            <button type="button" role="tab" aria-selected="true" className="h-6 w-[76px] border-r-2 border-b-2 border-[#707074] bg-[#f4f5fa] pt-0.5 text-center">
              Model View
            </button>
            <button type="button" role="tab" className="flex h-[22px] w-20 justify-center border-r-2 border-b-2 border-[#707074]">
              Print Preview
            </button>
          </div>
        </section>
      </main>

      <footer className="mt-1.5 flex h-[22px] shrink-0 items-center justify-between border-t border-[#a5a5a0] bg-[#f0f1f5]">
        <span className="flex items-center gap-3 pl-[7px]">
          <StatusOk />
          Ready
        </span>
        <span className="w-[84px] border-l border-[#a5a5a0] pl-0.5 whitespace-nowrap">No Selection</span>
      </footer>
    </div>
  );
}
